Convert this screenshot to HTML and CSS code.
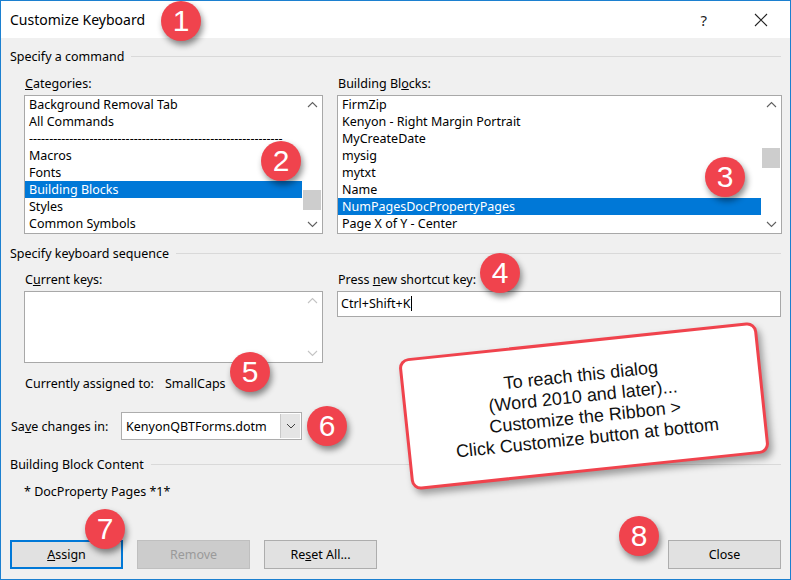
FILE: index.html
```html
<!DOCTYPE html>
<html>
<head>
<meta charset="utf-8">
<link rel="stylesheet" href="styles.css">
</head>
<body>
<div class="dialog">
  <div class="titlebar">
    <span class="title">Customize Keyboard</span>
    <span class="help">?</span>
    <svg class="close-x" width="14" height="14" viewBox="0 0 14 14"><path d="M1 1 L13 13 M13 1 L1 13" stroke="#222" stroke-width="1.1" fill="none"/></svg>
  </div>
  <div class="content">
    <div class="group-head"><span>Specify a command</span></div>
    <div class="cols">
      <div class="col">
        <div class="label"><u>C</u>ategories:</div>
        <div class="listbox tall">
          <ul class="items">
            <li>Background Removal Tab</li>
            <li>All Commands</li>
            <li><span class="dashes">---------------------------------------------------------------</span></li>
            <li>Macros</li>
            <li>Fonts</li>
            <li class="sel">Building Blocks</li>
            <li>Styles</li>
            <li>Common Symbols</li>
          </ul>
          <div class="scrollbar">
            <svg class="arr" width="11" height="7" viewBox="0 0 11 7"><path d="M1 6 L5.5 1.5 L10 6" stroke="#606060" stroke-width="1.1" fill="none"/></svg>
            <div class="track"><div class="thumb thumb-cat"></div></div>
            <svg class="arr" width="11" height="7" viewBox="0 0 11 7"><path d="M1 1 L5.5 5.5 L10 1" stroke="#606060" stroke-width="1.1" fill="none"/></svg>
          </div>
        </div>
      </div>
      <div class="col">
        <div class="label">Building Bl<u>o</u>cks:</div>
        <div class="listbox tall">
          <ul class="items">
            <li>FirmZip</li>
            <li>Kenyon - Right Margin Portrait</li>
            <li>MyCreateDate</li>
            <li>mysig</li>
            <li>mytxt</li>
            <li>Name</li>
            <li class="sel">NumPagesDocPropertyPages</li>
            <li>Page X of Y - Center</li>
          </ul>
          <div class="scrollbar">
            <svg class="arr" width="11" height="7" viewBox="0 0 11 7"><path d="M1 6 L5.5 1.5 L10 6" stroke="#606060" stroke-width="1.1" fill="none"/></svg>
            <div class="track"><div class="thumb thumb-bb"></div></div>
            <svg class="arr" width="11" height="7" viewBox="0 0 11 7"><path d="M1 1 L5.5 5.5 L10 1" stroke="#606060" stroke-width="1.1" fill="none"/></svg>
          </div>
        </div>
      </div>
    </div>

    <div class="group-head second"><span>Specify keyboard sequence</span></div>
    <div class="cols keys">
      <div class="col">
        <div class="label">C<u>u</u>rrent keys:</div>
        <div class="listbox short">
          <ul class="items"></ul>
          <div class="scrollbar">
            <svg class="arr" width="11" height="7" viewBox="0 0 11 7"><path d="M1 6 L5.5 1.5 L10 6" stroke="#c4c4c4" stroke-width="1.1" fill="none"/></svg>
            <div class="track"></div>
            <svg class="arr" width="11" height="7" viewBox="0 0 11 7"><path d="M1 1 L5.5 5.5 L10 1" stroke="#c4c4c4" stroke-width="1.1" fill="none"/></svg>
          </div>
        </div>
        <div class="assigned"><span class="assigned-label">Currently assigned to:</span><span>SmallCaps</span></div>
      </div>
      <div class="col">
        <div class="label">Press <u>n</u>ew shortcut key:</div>
        <div class="textbox">Ctrl+Shift+K<span class="caret"></span></div>
      </div>
    </div>

    <div class="save-row">
      <span class="save-label">Sa<u>v</u>e changes in:</span>
      <div class="combo">
        <span class="combo-text">KenyonQBTForms.dotm</span>
        <span class="combo-btn"><svg width="10" height="6" viewBox="0 0 10 6"><path d="M1 1 L5 5 L9 1" stroke="#404040" stroke-width="1" fill="none"/></svg></span>
      </div>
    </div>

    <div class="group-head third"><span>Building Block Content</span></div>
    <div class="bb-content">* DocProperty Pages *1*</div>

    <div class="buttons">
      <button class="btn default"><u>A</u>ssign</button>
      <button class="btn disabled">Remove</button>
      <button class="btn">Re<u>s</u>et All...</button>
      <button class="btn close-btn">Close</button>
    </div>
  </div>

  <div class="callout">
    <div class="callout-text">To reach this dialog<br>(Word 2010 and later)...<br>Customize the Ribbon &gt;<br>Click Customize button at bottom</div>
  </div>

  <div class="badge b1">1</div>
  <div class="badge b2">2</div>
  <div class="badge b3">3</div>
  <div class="badge b4">4</div>
  <div class="badge b5">5</div>
  <div class="badge b6">6</div>
  <div class="badge b7">7</div>
  <div class="badge b8">8</div>
</div>
</body>
</html>
```

FILE: styles.css
```css
html, body {
  margin: 0;
  padding: 0;
  background: #ffffff;
}
body {
  font-family: "Noto Sans", "Open Sans", sans-serif;
  font-size: 12.5px;
  color: #000;
}
.dialog {
  position: relative;
  width: 791px;
  height: 580px;
  box-sizing: border-box;
  border: 1px solid #1c80d0;
  background: #f0f0f0;
  overflow: hidden;
  display: flex;
  flex-direction: column;
}
.titlebar {
  height: 37px;
  flex: none;
  background: #ffffff;
  display: flex;
  align-items: center;
  padding-left: 9px;
}
.title {
  flex: 1;
  font-size: 14px;
  color: #000;
}
.help {
  font-size: 15px;
  color: #222;
  margin-right: 47px;
}
.close-x {
  margin-right: 22px;
}
.content {
  flex: 1;
  padding: 0 8px 0 9px;
  display: flex;
  flex-direction: column;
}
.group-head {
  display: flex;
  align-items: center;
  height: 17px;
  line-height: 17px;
  margin-top: 10px;
}
.group-head::after {
  content: "";
  flex: 1;
  height: 1px;
  background: #d9d9d9;
  margin-left: 7px;
  margin-right: 1px;
}
.group-head.second { margin-top: 11px; }
.group-head.third { margin-top: 16px; }
.cols {
  display: grid;
  grid-template-columns: 299px 1fr;
  column-gap: 14px;
  margin-left: 14px;
}
.label {
  height: 17px;
  line-height: 17px;
  margin-top: 10px;
  margin-bottom: 3px;
  padding-left: 1px;
}
.keys .label { margin-top: 9px; }
.listbox {
  display: flex;
  background: #fff;
  border: 1px solid #a8a8a8;
}
.listbox.tall { height: 137px; }
.listbox.short { height: 70px; }
.items {
  list-style: none;
  margin: 0;
  padding: 0;
  flex: 1;
  overflow: hidden;
}
.items li {
  height: 17px;
  line-height: 18px;
  padding-left: 4px;
  white-space: nowrap;
}
.items li.sel {
  background: #0078d7;
  color: #fff;
}
.dashes {
  display: inline-block;
  vertical-align: top;
}
.scrollbar {
  width: 20px;
  flex: none;
  display: flex;
  flex-direction: column;
  align-items: center;
  background: #fff;
}
.arr {
  flex: none;
  margin: 5px 0;
}
.track {
  flex: 1;
  width: 100%;
  position: relative;
}
.thumb {
  position: absolute;
  left: 1px;
  right: 1px;
  height: 20px;
  background: #cdcdcd;
}
.thumb-cat { top: 77px; }
.thumb-bb { top: 35px; }
.textbox {
  height: 24px;
  line-height: 24px;
  background: #fff;
  border: 1px solid #a8a8a8;
  padding-left: 3px;
  margin-right: 1px;
}
.caret {
  display: inline-block;
  width: 1px;
  height: 15px;
  background: #000;
  vertical-align: middle;
  margin-left: 1px;
  position: relative;
  top: -1px;
}
.assigned {
  height: 17px;
  line-height: 17px;
  margin-top: 12px;
  padding-left: 1px;
}
.assigned-label {
  display: inline-block;
  width: 140px;
}
.save-row {
  display: flex;
  align-items: center;
  height: 28px;
  margin-top: 20px;
}
.save-label {
  width: 110px;
  padding-left: 1px;
}
.combo {
  width: 179px;
  height: 26px;
  border: 1px solid #adadad;
  background: #fff;
  display: flex;
  align-items: center;
}
.combo-text {
  flex: 1;
  padding-left: 4px;
}
.combo-btn {
  width: 19px;
  height: 24px;
  margin-right: 1px;
  background: #e5e5e5;
  border-left: 1px solid #c8c8c8;
  display: flex;
  align-items: center;
  justify-content: center;
}
.bb-content {
  height: 17px;
  line-height: 17px;
  margin-top: 10px;
  padding-left: 14px;
}
.buttons {
  display: flex;
  gap: 14px;
  margin-top: 40px;
}
.btn {
  width: 113px;
  height: 29px;
  box-sizing: border-box;
  border: 1px solid #adadad;
  background: #e1e1e1;
  font-family: inherit;
  font-size: inherit;
  color: #000;
  padding: 0;
}
.btn.default {
  border: 2px solid #0078d7;
}
.btn.disabled {
  background: #cccccc;
  border-color: #bfbfbf;
  color: #9a9a9a;
}
.btn.close-btn {
  margin-left: auto;
  margin-right: 1px;
}
.callout {
  position: absolute;
  left: 403px;
  top: 339px;
  width: 354px;
  height: 126px;
  background: #fff;
  border: 3px solid #f0434d;
  border-radius: 10px;
  box-shadow: 3px 5px 7px rgba(0, 0, 0, 0.35);
  transform: rotate(-6deg);
  display: flex;
  align-items: center;
  justify-content: center;
}
.callout-text {
  font-family: "Liberation Sans", Arial, sans-serif;
  font-size: 18px;
  line-height: 21px;
  text-align: center;
  color: #111;
  position: relative;
  top: 1px;
}
.badge {
  position: absolute;
  width: 40px;
  height: 40px;
  border-radius: 50%;
  background: #f0434d;
  color: #fff;
  font-family: "Liberation Sans", Arial, sans-serif;
  font-size: 30px;
  line-height: 40px;
  text-align: center;
  box-shadow: 2px 4px 6px rgba(0, 0, 0, 0.45);
}
.b1 { left: 160px; top: 0px; }
.b2 { left: 260px; top: 140px; }
.b3 { left: 704px; top: 156px; }
.b4 { left: 479px; top: 252px; }
.b5 { left: 229px; top: 351px; }
.b6 { left: 306px; top: 405px; }
.b7 { left: 84px; top: 508px; }
.b8 { left: 618px; top: 515px; }
```
